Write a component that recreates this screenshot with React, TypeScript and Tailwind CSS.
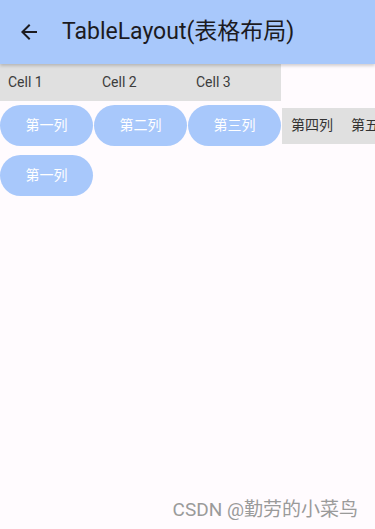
export default function App() {
  const font = { fontFamily: 'Roboto, "Noto Sans CJK SC", sans-serif' };
  return (
    <div
      className="relative h-[529px] w-[375px] overflow-hidden bg-[#fffbfe] font-['Roboto','Noto_Sans_CJK_SC',sans-serif]"
      style={font}
    >
      {/* APP BAR */}
      <header className="relative z-10 flex h-16 items-center bg-[#a8c8fb] shadow-[0_2px_3px_rgba(0,0,0,0.18)]">
        <div className="flex w-[62px] pl-[17px]">
          <svg width="24" height="24" viewBox="0 0 24 24" className="text-[#1c1b1f]">
            <path d="M20 11H7.83l5.59-5.59L12 4l-8 8 8 8 1.41-1.41L7.83 13H20v-2z" fill="currentColor" />
          </svg>
        </div>
        <h1 className="text-[23px] leading-7 text-[#1c1b1f]">TableLayout(表格布局)</h1>
      </header>

      {/* ROW 1 */}
      <div className="flex h-[37px] w-[281px] items-center bg-[#e0e0e0] text-[14px] text-[#3c3c3c]">
        <span className="w-[94px] pl-2">Cell 1</span>
        <span className="w-[94px] pl-2">Cell 2</span>
        <span className="w-[93px] pl-2">Cell 3</span>
      </div>

      {/* ROW 2 */}
      <div className="mt-[4px] flex items-center whitespace-nowrap">
        <button className="h-[41px] w-[93px] shrink-0 rounded-full bg-[#a8c8fb] text-[14px] text-white">第一列</button>
        <button className="ml-[1px] h-[41px] w-[93px] shrink-0 rounded-full bg-[#a8c8fb] text-[14px] text-white">第二列</button>
        <button className="ml-[1px] h-[41px] w-[93px] shrink-0 rounded-full bg-[#a8c8fb] text-[14px] text-white">第三列</button>
        <div className="ml-[1px] flex h-[36px] min-w-0 flex-1 items-center gap-[18px] overflow-hidden bg-[#e0e0e0] pl-[9px] text-[14px] text-[#333]">
          <span className="shrink-0">第四列</span>
          <span className="shrink-0">第五列</span>
        </div>
      </div>

      {/* ROW 3 */}
      <div className="mt-[9px] flex">
        <button className="h-[41px] w-[93px] rounded-full bg-[#a8c8fb] text-[14px] text-white">第一列</button>
      </div>

      <div className="absolute bottom-[5px] right-[17px] text-[19px] text-[#9a9a9a]">CSDN @勤劳的小菜鸟</div>
    </div>
  );
}
